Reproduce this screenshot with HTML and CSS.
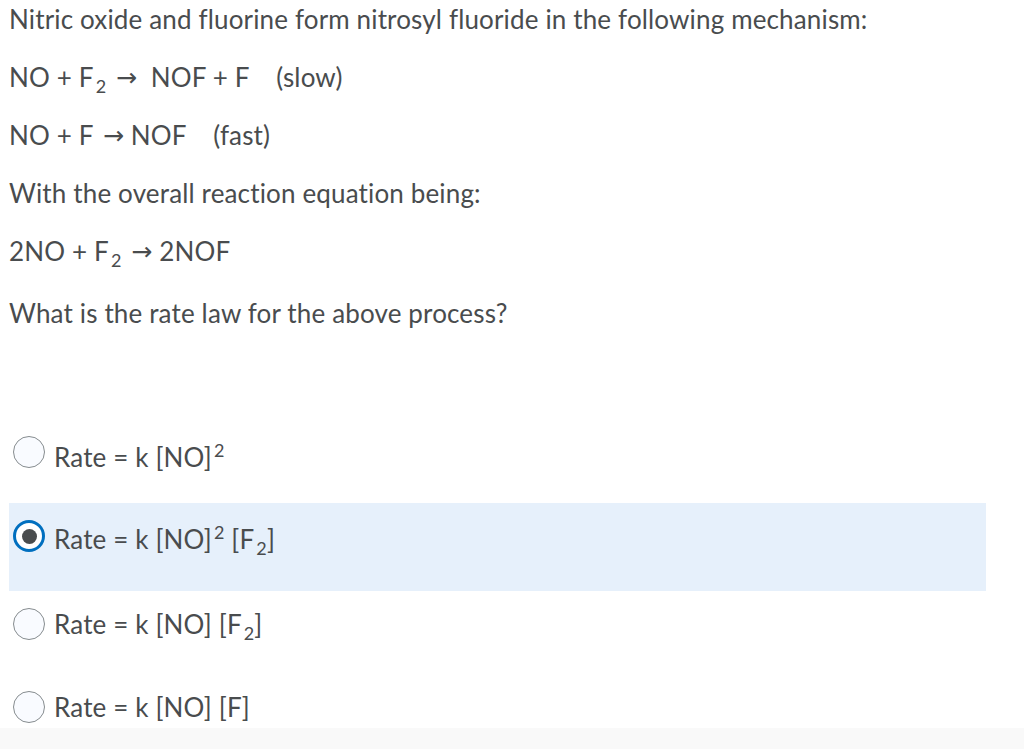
FILE: index.html
```html
<!DOCTYPE html>
<html lang="en">
<head>
<meta charset="utf-8">
<title>Question</title>
<link rel="stylesheet" href="styles.css">
</head>
<body>
<div class="page">
  <div class="question">
    <p class="line">Nitric oxide and fluorine form nitrosyl fluoride in the following mechanism:</p>
    <p class="line">NO + F<sub>2</sub> <span class="arrow">→</span>&nbsp; NOF + F &nbsp;&nbsp;&nbsp;(slow)</p>
    <p class="line">NO + F <span class="arrow">→</span> NOF &nbsp;&nbsp;&nbsp;(fast)</p>
    <p class="line">With the overall reaction equation being:</p>
    <p class="line">2NO + F<sub>2</sub> <span class="arrow">→</span> 2NOF</p>
    <p class="line last">What is the rate law for the above process?</p>
  </div>
  <div class="options">
    <div class="option">
      <span class="radio"></span>
      <span class="label raised">Rate = k [NO]<sup>2</sup></span>
    </div>
    <div class="option selected">
      <span class="radio checked"><span class="dot"></span></span>
      <span class="label mid">Rate = k [NO]<sup>2</sup> [F<sub>2</sub>]</span>
    </div>
    <div class="option">
      <span class="radio"></span>
      <span class="label">Rate = k [NO] [F<sub>2</sub>]</span>
    </div>
    <div class="option final">
      <span class="radio"></span>
      <span class="label">Rate = k [NO] [F]</span>
    </div>
  </div>
</div>
<div class="footer"></div>
</body>
</html>
```

FILE: styles.css
```css
html, body {
  margin: 0;
  padding: 0;
  background: #ffffff;
}

body {
  font-family: Lato, "Liberation Sans", sans-serif;
  color: #494c4e;
  font-size: 26px;
  letter-spacing: 0.15px;
  height: 749px;
  overflow: hidden;
  display: flex;
  flex-direction: column;
}

.page {
  padding: 4px 38px 0 9px;
  flex: none;
}

.line {
  margin: 0 0 28px;
  line-height: 30px;
  white-space: nowrap;
}

.line.last {
  margin-top: 32px;
  margin-bottom: 0;
}

sub, sup {
  font-size: 18px;
  line-height: 0;
  position: relative;
  vertical-align: baseline;
  margin-left: 2px;
}

sub {
  top: 6px;
}

sup {
  top: -10px;
}

.arrow {
  font-family: "DejaVu Sans", sans-serif;
  font-size: 25px;
  line-height: 0;
  position: relative;
  top: -1px;
  margin-left: 3px;
}

.options {
  margin-top: 91px;
  display: flex;
  flex-direction: column;
}

.option {
  height: 84px;
  box-sizing: border-box;
  padding: 17px 0 0 4px;
  display: flex;
  align-items: flex-start;
  gap: 9px;
}

.option.selected {
  height: 88px;
  background: #e6f0fb;
}

.option.final {
  height: 53px;
  padding-top: 16px;
}

.radio {
  width: 32px;
  height: 32px;
  box-sizing: border-box;
  border-radius: 50%;
  border: 1.5px solid #868c8f;
  background: #f9fbff;
  display: flex;
  align-items: center;
  justify-content: center;
  flex: none;
}

.radio.checked {
  border: 3px solid #006fbf;
  background: #ffffff;
}

.dot {
  width: 15px;
  height: 15px;
  border-radius: 50%;
  background: #494c4e;
}

.label {
  line-height: 30px;
  margin-top: 1px;
  white-space: nowrap;
}

.label.raised {
  margin-top: 6px;
}

.label.mid {
  margin-top: 4px;
}

.footer {
  flex: 1;
  background: #f9f9f9;
}
```
